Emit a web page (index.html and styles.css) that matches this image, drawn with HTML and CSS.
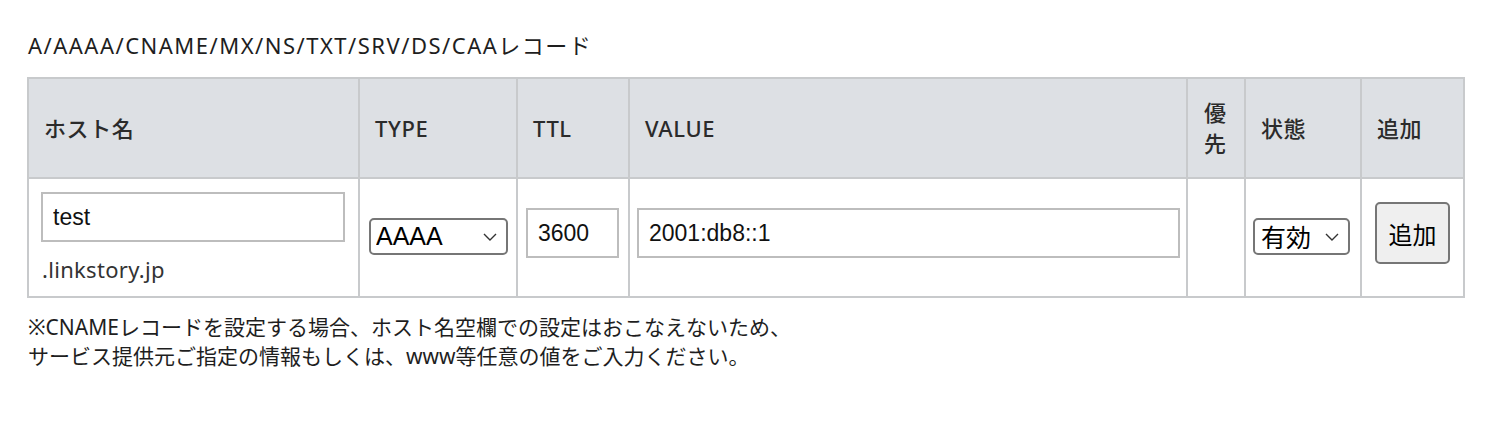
FILE: index.html
```html
<!DOCTYPE html>
<html lang="ja">
<head>
<meta charset="utf-8">
<title>DNS records</title>
<link rel="stylesheet" href="styles.css">
</head>
<body>
<div class="page">
  <h2 class="title">A/AAAA/CNAME/MX/NS/TXT/SRV/DS/CAAレコード</h2>
  <table class="records">
    <colgroup>
      <col class="c-host"><col class="c-type"><col class="c-ttl"><col class="c-value"><col class="c-prio"><col class="c-state"><col class="c-add">
    </colgroup>
    <thead>
      <tr>
        <th>ホスト名</th>
        <th>TYPE</th>
        <th>TTL</th>
        <th>VALUE</th>
        <th class="prio">優先</th>
        <th>状態</th>
        <th>追加</th>
      </tr>
    </thead>
    <tbody>
      <tr>
        <td class="host">
          <input class="field host-input" type="text" value="test">
          <div class="domain">.linkstory.jp</div>
        </td>
        <td><select class="sel sel-type"><option>AAAA</option></select></td>
        <td><input class="field ttl-input" type="text" value="3600"></td>
        <td><input class="field value-input" type="text" value="2001:db8::1"></td>
        <td></td>
        <td><select class="sel sel-state"><option>有効</option></select></td>
        <td class="add"><button class="btn" type="button">追加</button></td>
      </tr>
    </tbody>
  </table>
  <p class="note">※CNAMEレコードを設定する場合、ホスト名空欄での設定はおこなえないため、<br>サービス提供元ご指定の情報もしくは、www等任意の値をご入力ください。</p>
</div>
</body>
</html>
```

FILE: styles.css
```css
html, body {
  margin: 0;
  padding: 0;
  background: #fff;
}
body {
  font-family: "Noto Sans", "Noto Sans CJK JP", sans-serif;
  color: #222;
  font-size: 21px;
}
.page {
  padding: 30px 0 0 27px;
}
.title {
  margin: 0 0 17px 1px;
  font-size: 22px;
  letter-spacing: 1.5px;
  font-weight: normal;
  line-height: 30px;
  color: #1e1e1e;
}
.records {
  border-collapse: collapse;
  table-layout: fixed;
  width: 1436px;
}
.c-host { width: 331px; }
.c-type { width: 158px; }
.c-ttl { width: 112px; }
.c-value { width: 558px; }
.c-prio { width: 58px; }
.c-state { width: 116px; }
.c-add { width: 103px; }
.records th,
.records td {
  border: 2px solid #c8cacc;
  box-sizing: border-box;
}
.records thead tr {
  height: 100px;
}
.records tbody tr {
  height: 119px;
}
.records th {
  background: #dde0e4;
  color: #2b2b2b;
  text-align: left;
  font-weight: 500;
  font-size: 22px;
  letter-spacing: 0.6px;
  line-height: 31px;
  padding: 0 15px;
}
.records th.prio {
  padding: 0 16px;
}
.records td {
  padding: 0 7px;
  vertical-align: middle;
}
.records td.host {
  padding: 13px 12px 0;
  vertical-align: top;
}
.field {
  box-sizing: border-box;
  height: 50px;
  border: 2px solid #bdbdbd;
  border-radius: 0;
  padding: 0 10px;
  font-family: "Liberation Sans", "Noto Sans CJK JP", sans-serif;
  font-size: 23px;
  color: #111;
  background: #fff;
  display: block;
}
.host-input { width: 304px; }
.ttl-input { width: 93px; margin: 0 0 9px 1px; }
.value-input { width: 543px; margin-bottom: 9px; }
.domain {
  margin-top: 12px;
  margin-left: 1px;
  line-height: 30px;
  font-size: 22px;
  letter-spacing: 0.3px;
  color: #333;
}
.sel {
  box-sizing: border-box;
  height: 37px;
  border: 2px solid #767676;
  border-radius: 5px;
  background-color: #fff;
  background-image: url("data:image/svg+xml;utf8,<svg xmlns='http://www.w3.org/2000/svg' width='14' height='8' viewBox='0 0 14 8'><path d='M1 1 L7 7 L13 1' fill='none' stroke='%23333' stroke-width='1.4'/></svg>");
  background-repeat: no-repeat;
  background-size: 14px 8px;
  color: #000;
  display: block;
  appearance: none;
  -webkit-appearance: none;
  padding: 0 0 0 5px;
  line-height: 33px;
}
.sel-type {
  width: 139px;
  margin: 0 0 2px 2px;
  font-family: "Liberation Sans", sans-serif;
  font-size: 25px;
  background-position: right 9px center;
}
.sel-state {
  width: 97px;
  margin: 0 0 2px 0;
  font-family: "Noto Sans CJK JP", sans-serif;
  font-size: 25px;
  padding-left: 6px;
  background-position: right 9px center;
}
.btn {
  box-sizing: border-box;
  display: block;
  width: 75px;
  height: 62px;
  margin: 0 auto 9px;
  border: 2px solid #767676;
  border-radius: 5px;
  background: #efefef;
  color: #000;
  font-family: "Noto Sans CJK JP", sans-serif;
  font-size: 24px;
  padding: 0;
}
.note {
  margin: 15px 0 0 1px;
  line-height: 29px;
  font-size: 21px;
  color: #1e1e1e;
}
```
